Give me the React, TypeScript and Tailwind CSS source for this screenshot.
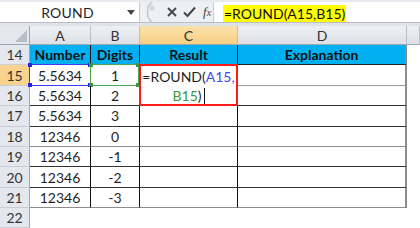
import React from 'react';

const rows = [
  { n: 15, a: '5.5634', b: '1', line: 'border-b-[#9a9a9a]' },
  { n: 16, a: '5.5634', b: '2', line: 'border-b-[#333333]' },
  { n: 17, a: '5.5634', b: '3', line: 'border-b-[#333333]' },
  { n: 18, a: '12346', b: '0', line: 'border-b-[#8c8c8c]' },
  { n: 19, a: '12346', b: '-1', line: 'border-b-[#333333]' },
  { n: 20, a: '12346', b: '-2', line: 'border-b-[#333333]' },
  { n: 21, a: '12346', b: '-3', line: 'border-b-[#8c8c8c]' },
];

function RowHead({ n, active }: { n: number; active?: boolean }) {
  return (
    <div
      className={`flex items-center justify-center border-r border-b border-r-[#9ea6b0] border-b-[#c9ced6] text-[14px] text-[#333] ${
        active ? 'bg-[#f7d38e]' : 'bg-[#e4e8ee]'
      }`}
    >
      {n}
    </div>
  );
}

function Corners({ color }: { color: string }) {
  return (
    <>
      <span className={`absolute -left-[2px] -top-[2px] h-[4px] w-[4px] ${color}`} />
      <span className={`absolute -right-[2px] -top-[2px] h-[4px] w-[4px] ${color}`} />
      <span className={`absolute -left-[2px] -bottom-[2px] h-[4px] w-[4px] ${color}`} />
      <span className={`absolute -right-[2px] -bottom-[2px] h-[4px] w-[4px] ${color}`} />
    </>
  );
}

export default function App() {
  return (
    <div className="h-[228px] w-[420px] overflow-hidden bg-white font-[family-name:Lato,'Liberation_Sans',sans-serif] text-[#1f1f1f]">
      {/* formula bar */}
      <div className="flex h-[23px] border-t-2 border-b border-t-[#e6e9ed] border-b-[#b9bec6] bg-white">
        <div className="flex w-[140px] items-center border-r border-[#c6cbd2]">
          <span className="flex-1 pl-[8px] text-center text-[14px] tracking-[0.2px]">ROUND</span>
          <svg width="8" height="5" viewBox="0 0 8 5" className="mr-[4px]">
            <path d="M0 0h8L4 5z" fill="#444" />
          </svg>
        </div>
        <div className="flex w-[73px] items-center bg-[#eef0f3]">
          <svg width="14" height="20" viewBox="0 0 14 20" className="ml-[3px]">
            <path d="M9 0.5C3 3 3 17 9 19.5" fill="none" stroke="#c3c8cf" strokeWidth="1.5" />
            <circle cx="9" cy="6" r="2.5" fill="#d3d7dc" />
          </svg>
          <svg width="12" height="12" viewBox="0 0 12 12" className="ml-[9px]">
            <path d="M2 2l8 8M10 2l-8 8" stroke="#454545" strokeWidth="1.8" />
          </svg>
          <svg width="13" height="12" viewBox="0 0 13 12" className="ml-[5px]">
            <path d="M1 6.5l3.5 3.5L12 1.5" fill="none" stroke="#454545" strokeWidth="2" />
          </svg>
          <span className="ml-[7px] font-[family-name:'Liberation_Serif',serif] text-[13px] italic text-[#454545]">
            f<span className="text-[10px]">x</span>
          </span>
        </div>
        <div className="flex flex-1 items-end border-l border-[#c6cbd2] pl-[9px]">
          <span className="h-[17px] bg-[#ffff00] px-[1px] text-[14px] leading-[17px] text-[#111]">
            =ROUND(A15,B15)
          </span>
        </div>
      </div>
      <div className="h-[3px] bg-[#dfe3e8]" />

      {/* sheet */}
      <div className="grid grid-cols-[30px_61px_49px_98px_169px_1fr] grid-rows-[19px_repeat(8,20.4px)_20px]">
        {/* column headers */}
        <div className="relative border-r border-b border-r-[#9ea6b0] border-b-[#9ea6b0] bg-[#e4e8ee]">
          <svg width="12" height="12" viewBox="0 0 12 12" className="absolute right-[2px] bottom-[2px]">
            <path d="M12 0V12H0z" fill="#b8bec6" />
          </svg>
        </div>
        {['A', 'B', 'C', 'D', ''].map((c) => (
          <div
            key={c}
            className={`flex items-center justify-center border-r border-b border-r-[#b9bfc8] border-b-[#9ea6b0] text-[14px] text-[#333] ${
              c === 'C' ? 'bg-gradient-to-b from-[#fbe2ab] to-[#f7cf83]' : 'bg-gradient-to-b from-[#eef0f3] to-[#dde1e6]'
            }`}
          >
            {c}
          </div>
        ))}

        {/* row 14 */}
        <RowHead n={14} />
        {['Number', 'Digits', 'Result', 'Explanation'].map((h, i) => (
          <div
            key={h}
            className={`flex items-center justify-center border-b border-b-[#222] bg-[#00b0f0] text-[14px] font-bold text-[#111] ${
              i === 3 ? 'border-r-2 border-r-[#8c8c8c]' : 'border-r border-r-[#111]'
            }`}
          >
            {h}
          </div>
        ))}
        <div />

        {rows.map((r) => (
          <React.Fragment key={r.n}>
            <RowHead n={r.n} active={r.n === 15} />
            <div className={`relative flex items-center justify-center border-r border-b border-r-[#111] ${r.line} text-[14px]`}>
              {r.a}
              {r.n === 15 && (
                <div className="absolute -top-px -left-px -right-px -bottom-px border border-[#3b3bf5]">
                  <Corners color="bg-[#2424e0]" />
                </div>
              )}
            </div>
            <div className={`relative flex items-center justify-center border-r border-b border-r-[#111] ${r.line} text-[14px]`}>
              {r.b}
              {r.n === 15 && (
                <div className="absolute -top-px -left-px right-0 -bottom-px border border-[#4ea64e]">
                  <Corners color="bg-[#3a963a]" />
                </div>
              )}
            </div>
            <div className={`relative border-r border-b border-r-[#111] ${r.line}`}>
              {r.n === 15 && (
                <div className="absolute -top-px -left-px -right-px z-10 flex h-[42px] flex-col items-center whitespace-nowrap border-2 border-[#ff1a1a] bg-white pt-[1px] text-[14px] leading-[19px]">
                  <span>
                    =ROUND(<span className="text-[#4646f0]">A15,</span>
                  </span>
                  <span className="flex items-center">
                    <span className="text-[#3a9a3a]">B15</span>)
                    <span className="ml-[2px] h-[16px] w-px bg-[#111]" />
                  </span>
                </div>
              )}
            </div>
            <div className={`border-r-2 border-b border-r-[#8c8c8c] ${r.line}`} />
            <div />
          </React.Fragment>
        ))}

        <RowHead n={22} />
        <div className="col-span-5" />
      </div>
    </div>
  );
}
